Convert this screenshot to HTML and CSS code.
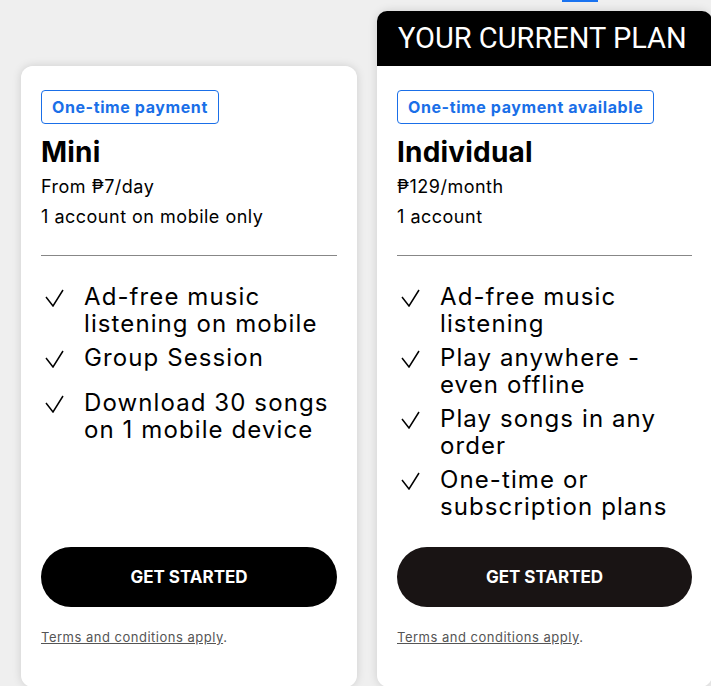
FILE: index.html
```html
<!DOCTYPE html>
<html lang="en">
<head>
<meta charset="utf-8">
<title>Plans</title>
<link rel="stylesheet" href="styles.css">
</head>
<body>
<div class="page">
  <div class="topbar"></div>
  <div class="plans">
    <section class="card">
      <div class="card-body">
        <span class="badge">One-time payment</span>
        <h2 class="plan-name">Mini</h2>
        <p class="plan-price">From ₱7/day</p>
        <p class="plan-accounts">1 account on mobile only</p>
        <hr class="divider">
        <ul class="features">
          <li><span class="check"><svg width="20" height="18" viewBox="0 0 20 18"><polyline points="2,8 9,17 19,1" fill="none" stroke="#000" stroke-width="1.5"/></svg></span><span>Ad-free music listening on mobile</span></li>
          <li><span class="check"><svg width="20" height="18" viewBox="0 0 20 18"><polyline points="2,8 9,17 19,1" fill="none" stroke="#000" stroke-width="1.5"/></svg></span><span>Group Session</span></li>
          <li><span class="check"><svg width="20" height="18" viewBox="0 0 20 18"><polyline points="2,8 9,17 19,1" fill="none" stroke="#000" stroke-width="1.5"/></svg></span><span>Download 30 songs on 1 mobile device</span></li>
        </ul>
        <div class="cta">
          <button class="btn">GET STARTED</button>
          <p class="terms"><a href="#">Terms and conditions apply</a>.</p>
        </div>
      </div>
    </section>
    <section class="card current">
      <div class="card-header">YOUR CURRENT PLAN</div>
      <div class="card-body">
        <span class="badge">One-time payment available</span>
        <h2 class="plan-name">Individual</h2>
        <p class="plan-price">₱129/month</p>
        <p class="plan-accounts">1 account</p>
        <hr class="divider">
        <ul class="features">
          <li><span class="check"><svg width="20" height="18" viewBox="0 0 20 18"><polyline points="2,8 9,17 19,1" fill="none" stroke="#000" stroke-width="1.5"/></svg></span><span>Ad-free music listening</span></li>
          <li><span class="check"><svg width="20" height="18" viewBox="0 0 20 18"><polyline points="2,8 9,17 19,1" fill="none" stroke="#000" stroke-width="1.5"/></svg></span><span>Play anywhere - even offline</span></li>
          <li><span class="check"><svg width="20" height="18" viewBox="0 0 20 18"><polyline points="2,8 9,17 19,1" fill="none" stroke="#000" stroke-width="1.5"/></svg></span><span>Play songs in any order</span></li>
          <li><span class="check"><svg width="20" height="18" viewBox="0 0 20 18"><polyline points="2,8 9,17 19,1" fill="none" stroke="#000" stroke-width="1.5"/></svg></span><span>One-time or subscription plans</span></li>
        </ul>
        <div class="cta">
          <button class="btn btn-dark">GET STARTED</button>
          <p class="terms"><a href="#">Terms and conditions apply</a>.</p>
        </div>
      </div>
    </section>
  </div>
</div>
</body>
</html>
```

FILE: styles.css
```css
html, body {
  margin: 0;
  padding: 0;
  background: #efefef;
}

body {
  font-family: Inter, "Noto Sans", sans-serif;
  color: #000;
}

.page {
  width: 711px;
  height: 686px;
  overflow: hidden;
}

.topbar {
  width: 36px;
  height: 2px;
  margin-left: 562px;
  background: #1a73f0;
}

.plans {
  display: flex;
  gap: 20px;
  padding: 9px 0 0 21px;
}

.card {
  width: 336px;
  flex: none;
  display: flex;
  flex-direction: column;
  margin-top: 55px;
  border-radius: 12px;
  box-shadow: 0 0 10px rgba(0, 0, 0, 0.14);
}

.card.current {
  margin-top: 0;
  width: 335px;
}

.card-header {
  height: 55px;
  background: #000;
  color: #fff;
  border-radius: 10px 10px 0 0;
  font-family: Roboto, "Liberation Sans", sans-serif;
  font-size: 29px;
  line-height: 55px;
  padding-left: 21px;
}

.card-body {
  flex: 1;
  display: flex;
  flex-direction: column;
  align-items: flex-start;
  background: #fff;
  border-radius: 12px;
  padding: 24px 20px 41px;
}

.current .card-body {
  border-radius: 0 0 12px 12px;
}

.badge {
  border: 1px solid #1a6fe8;
  border-radius: 4px;
  color: #1a6fe8;
  font-weight: 700;
  font-size: 16px;
  line-height: 20px;
  letter-spacing: 0.6px;
  padding: 6px 10px;
}

.plan-name {
  margin: 11px 0 0;
  font-size: 28px;
  line-height: 34px;
  font-weight: 700;
  letter-spacing: 0.2px;
}

.plan-price,
.plan-accounts {
  margin: 6px 0 0;
  font-size: 18px;
  line-height: 24px;
  letter-spacing: 0.5px;
}

.divider {
  align-self: stretch;
  margin: 26px 0 0;
  border: 0;
  border-top: 1px solid #878787;
}

.features {
  list-style: none;
  margin: 27px 0 27px;
  padding: 0;
  display: flex;
  flex-direction: column;
  gap: 7px;
  font-size: 24px;
  line-height: 27px;
  letter-spacing: 1.1px;
}

.features li {
  display: flex;
  min-height: 38px;
}

.check {
  flex: none;
  width: 40px;
  padding: 6px 0 0 3px;
}

.check svg {
  display: block;
}

.cta {
  margin-top: auto;
  align-self: stretch;
}

.btn {
  display: block;
  width: 100%;
  height: 60px;
  border: 0;
  border-radius: 30px;
  background: #000;
  color: #fff;
  font-family: Inter, "Noto Sans", sans-serif;
  font-weight: 700;
  font-size: 17px;
}

.btn-dark {
  background: #191414;
}

.terms {
  margin: 21px 0 0;
  font-size: 13px;
  line-height: 18px;
  letter-spacing: 0.5px;
  color: #555;
}

.terms a {
  color: #555;
  text-decoration: underline;
}
```
